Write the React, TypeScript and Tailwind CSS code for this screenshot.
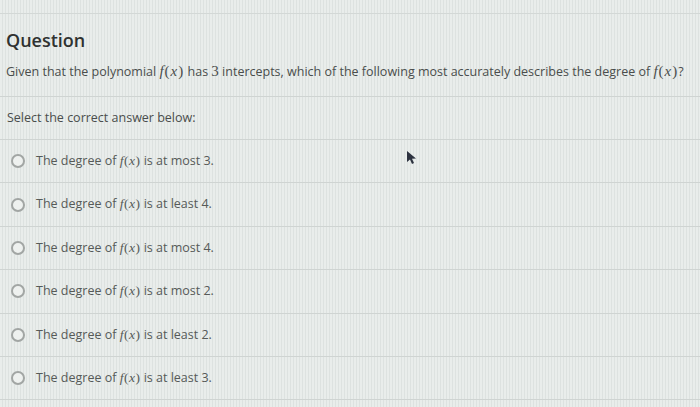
import React from "react";

const options = [
  "at most 3.",
  "at least 4.",
  "at most 4.",
  "at most 2.",
  "at least 2.",
  "at least 3.",
];

function Fx({ big }: { big?: boolean }) {
  return (
    <span
      className={
        big
          ? "font-['Liberation_Serif',serif] text-[15px] tracking-[1px]"
          : "font-['Liberation_Serif',serif] text-[13.5px] tracking-[0.5px]"
      }
    >
      <i>f</i>(<i>x</i>)
    </span>
  );
}

function Cursor() {
  return (
    <svg width="14" height="16" viewBox="0 0 14 16" className="absolute left-[405px] top-[150px]">
      <path d="M2 1 L2 12 L5 9.5 L7 14 L9 13 L7 8.8 L11 8.6 Z" fill="#2d3340" />
    </svg>
  );
}

export default function App() {
  return (
    <div className="relative w-[700px] h-[407px] overflow-hidden bg-[#e7ebe9] bg-[repeating-linear-gradient(90deg,#e9edeb_0px,#e9edeb_2px,#dde2e0_2px,#dde2e0_3px)] font-['Open_Sans',sans-serif] text-[#4a4d4c]">
      <div className="h-[14px] border-b border-[#d3d8d6]" />
      <div className="border-b border-[#cfd4d2] px-[6px] pb-[14px]">
        <h1 className="pt-[13px] text-[18px] leading-[26px] font-semibold text-[#2f3231]">Question</h1>
        <p className="mt-[8px] text-[12.5px] leading-[20px] text-[#4a4d4c] whitespace-nowrap">
          Given that the polynomial <Fx big /> has <span className="font-['Liberation_Serif',serif] text-[15px]">3</span> intercepts, which of the following most accurately describes the degree of <Fx big />?
        </p>
      </div>
      <div className="h-[43px] flex items-center px-[7px] border-b border-[#cfd4d2] text-[12.5px]">
        Select the correct answer below:
      </div>
      {options.map((o, i) => (
        <div key={i} className="h-[43.4px] flex items-center gap-[11px] pl-[11px] border-b border-[#cfd4d2] text-[12.5px] text-[#565a58]">
          <span className="w-[14px] h-[14px] rounded-full border-2 border-[#a2a6a4] bg-[#eef1ef]" />
          <span>
            The degree of <Fx /> is {o}
          </span>
        </div>
      ))}
      <Cursor />
    </div>
  );
}
